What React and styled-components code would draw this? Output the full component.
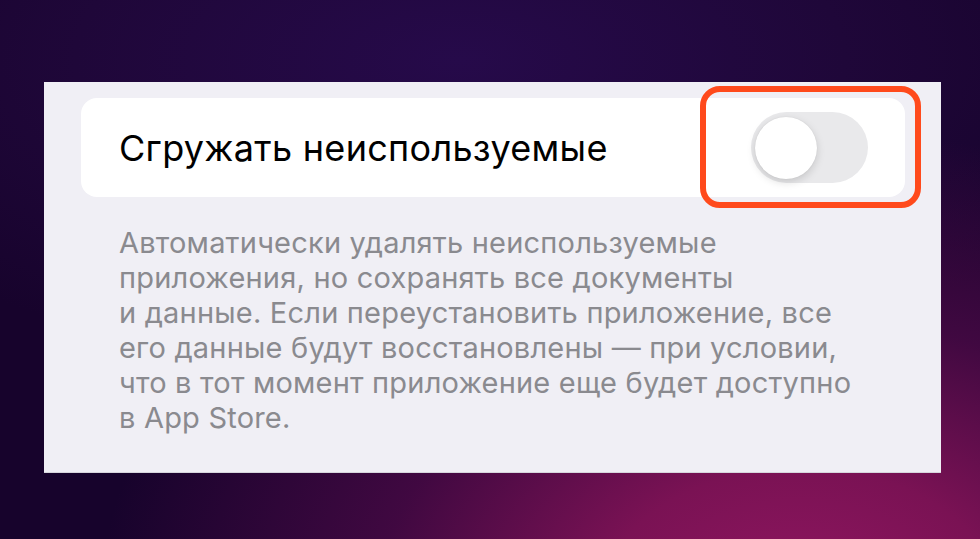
import styled, { createGlobalStyle } from "styled-components";

const Global = createGlobalStyle`
    html, body {
        margin: 0;
        padding: 0;
        width: 980px;
        height: 539px;
        overflow: hidden;
    }
    body {
        font-family: Inter, "Liberation Sans", sans-serif;
    }
`

const Backdrop = styled.div`
    width: 980px;
    height: 539px;
    box-sizing: border-box;
    padding: 82px 39px 0 44px;
    background:
        radial-gradient(ellipse 700px 470px at 800px 600px, #901660 0%, #7a1254 28%, rgba(78, 10, 72, 0.75) 60%, rgba(40, 4, 50, 0) 100%),
        radial-gradient(ellipse 700px 320px at 460px 60px, #260a4a 0%, #1f0739 55%, #17032c 100%),
        #18032a;
`

const Panel = styled.div`
    width: 897px;
    height: 391px;
    box-sizing: border-box;
    background: #f0eff5;
    border-bottom: 1px solid #d6d6dc;
    padding: 16px 36px 0 37px;
    display: flex;
    flex-direction: column;
`

const Card = styled.div`
    height: 99px;
    background: #ffffff;
    border-radius: 16px;
    display: flex;
    align-items: center;
    justify-content: space-between;
    padding: 0 37px 0 38px;
    position: relative;
`

const Label = styled.span`
    font-size: 36px;
    color: #000;
    letter-spacing: 0.3px;
`

const Track = styled.div`
    width: 117px;
    height: 71px;
    border-radius: 36px;
    background: #e9e9eb;
    display: flex;
    align-items: center;
    padding: 0 4px;
    box-sizing: border-box;
`

const Knob = styled.div`
    width: 62px;
    height: 62px;
    border-radius: 50%;
    background: #fff;
    box-shadow: 0 3px 8px rgba(0, 0, 0, 0.15), 0 0 1px rgba(0, 0, 0, 0.12);
`

const Highlight = styled.div`
    position: absolute;
    left: 619px;
    top: -12px;
    width: 221px;
    height: 122px;
    box-sizing: border-box;
    border: 6px solid #ff4a1c;
    border-radius: 20px;
`

const Note = styled.p`
    margin: 28px 0 0 38px;
    font-size: 29px;
    line-height: 35px;
    color: #8a8a8f;
    letter-spacing: 0.2px;
`

const App = () => {
    return (
        <>
            <Global />
            <Backdrop>
                <Panel>
                    <Card>
                        <Label>Сгружать неиспользуемые</Label>
                        <Track>
                            <Knob />
                        </Track>
                        <Highlight />
                    </Card>
                    <Note>
                        Автоматически удалять неиспользуемые<br />
                        приложения, но сохранять все документы<br />
                        и данные. Если переустановить приложение, все<br />
                        его данные будут восстановлены — при условии,<br />
                        что в тот момент приложение еще будет доступно<br />
                        в App Store.
                    </Note>
                </Panel>
            </Backdrop>
        </>
    )
}

export default App;
